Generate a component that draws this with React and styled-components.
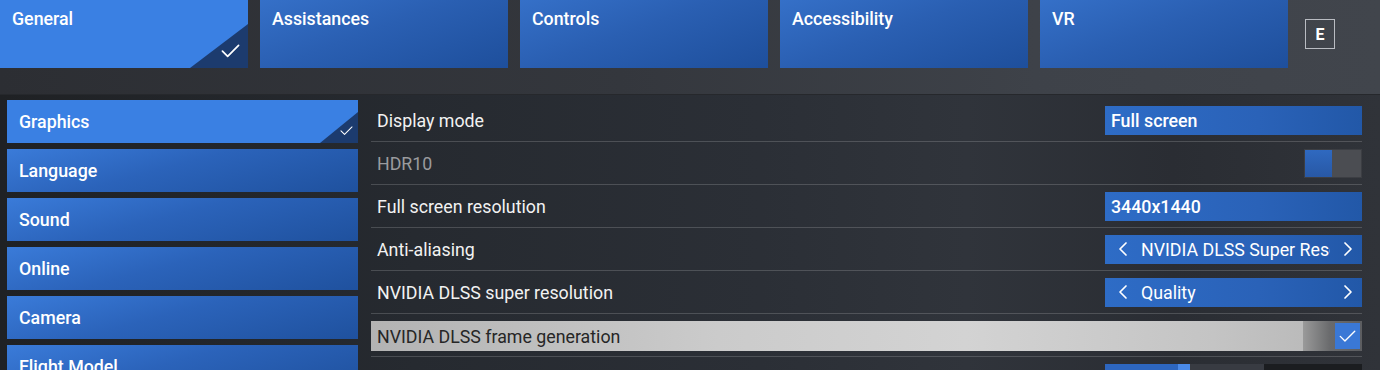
import React from 'react';
import styled, { createGlobalStyle } from 'styled-components';
import { ChevronLeft, ChevronRight } from 'lucide-react';

const GlobalStyle = createGlobalStyle`
  html, body {
    margin: 0;
    padding: 0;
    background: #25272b;
    overflow: hidden;
  }
  * {
    box-sizing: border-box;
  }
`;

const Page = styled.div`
  width: 1380px;
  height: 370px;
  overflow: hidden;
  font-family: Roboto, 'Noto Sans', sans-serif;
  color: #fff;
  background: linear-gradient(90deg, #1f2124 0%, #262a30 30%, #2b2f36 55%, #30343b 70%, #2a2d33 85%, #303339 100%);
`;

const TopBar = styled.div`
  height: 95px;
  display: flex;
  gap: 12px;
  background: linear-gradient(90deg, #2c2e33 0%, #34373d 45%, #3e4249 75%, #41454c 100%);
  border-bottom: 1px solid #26282c;
`;

const Tab = styled.div`
  position: relative;
  width: 248px;
  height: 68px;
  padding: 8px 12px;
  font-size: 17.8px;
  font-weight: 500;
  background: ${({ $active }) =>
    $active
      ? '#3a80e3'
      : 'linear-gradient(160deg, #3570c8 0%, #2a5fb2 45%, #1e4f9c 100%)'};
`;

const Corner = styled.div`
  position: absolute;
  right: 0;
  bottom: 0;
  width: ${({ $w }) => $w}px;
  height: ${({ $h }) => $h}px;
  background: #1c3b6e;
  clip-path: polygon(100% 0, 100% 100%, 0 100%);
  display: flex;
  align-items: flex-end;
  justify-content: flex-end;
`;

const CornerCheck = styled.svg`
  margin: ${({ $m }) => $m};
`;

const EWrap = styled.div`
  flex: 1;
  display: flex;
  padding-top: 19px;
  padding-left: 5px;
`;

const EKey = styled.div`
  width: 30px;
  height: 30px;
  border: 1.5px solid #b9bcc2;
  display: flex;
  align-items: center;
  justify-content: center;
  font-size: 16px;
  font-weight: 700;
`;

const Main = styled.div`
  display: flex;
  padding-left: 7px;
`;

const Sidebar = styled.div`
  width: 351px;
  padding-top: 5px;
  display: flex;
  flex-direction: column;
  gap: 6px;
`;

const SideItem = styled.div`
  position: relative;
  flex-shrink: 0;
  height: 43px;
  padding: 0 12px;
  display: flex;
  align-items: center;
  font-size: 17.8px;
  font-weight: 500;
  background: ${({ $active }) =>
    $active
      ? '#3a80e3'
      : 'linear-gradient(165deg, #3a7bd9 0%, #2b63ba 45%, #1f519e 100%)'};
`;

const Panel = styled.div`
  width: 991px;
  margin-left: 13px;
  padding-top: 4px;
  display: flex;
  flex-direction: column;
`;

const Row = styled.div`
  flex-shrink: 0;
  height: 43px;
  display: flex;
  align-items: center;
  justify-content: space-between;
  border-bottom: 1.5px solid rgba(255, 255, 255, 0.17);
`;

const HighlightWrap = styled(Row)`
  padding: 7px 0 5px;
`;

const Highlight = styled.div`
  height: 100%;
  width: 100%;
  display: flex;
  align-items: center;
  justify-content: space-between;
  background: linear-gradient(90deg, #b3b3b3 0%, #cbcbcb 35%, #d3d3d3 60%, #c4c4c4 85%, #b5b5b5 100%);
`;

const Label = styled.div`
  padding-left: 6px;
  font-size: 17.8px;
  color: ${({ $tone }) =>
    $tone === 'dim' ? '#9a9b9e' : $tone === 'dark' ? '#262626' : '#f2f2f2'};
`;

const ValueBox = styled.div`
  width: 257px;
  height: 29px;
  padding: 0 6px;
  display: flex;
  align-items: center;
  font-size: 17.8px;
  font-weight: 500;
  background: linear-gradient(90deg, #2e6cc6 0%, #2a62b8 60%, #2258a8 100%);
`;

const Selector = styled(ValueBox)`
  padding: 0 2px 0 6px;
  font-weight: 400;
  gap: 6px;
`;

const SelectorText = styled.span`
  flex: 1;
  white-space: nowrap;
  overflow: hidden;
`;

const Toggle = styled.div`
  width: 58px;
  height: 29px;
  display: flex;
  background: #4b4d52;
  border: 1px solid #3c3e43;
`;

const ToggleKnob = styled.div`
  width: 27px;
  background: linear-gradient(180deg, #2f69c0, #2858a5);
`;

const CheckCell = styled.div`
  width: 59px;
  height: 100%;
  display: flex;
  align-items: center;
  justify-content: flex-end;
  padding-right: 2px;
  background: linear-gradient(90deg, #9a9a9a 0%, #6a6b6d 45%, #5c5d60 100%);
`;

const CheckBox = styled.div`
  width: 25px;
  height: 26px;
  display: flex;
  align-items: center;
  justify-content: center;
  background: #3a78d6;
`;

const Slider = styled.div`
  width: 257px;
  height: 29px;
  display: flex;
  align-self: flex-start;
  margin-top: 7px;
  margin-left: auto;
`;

const SliderFill = styled.div`
  width: 73px;
  background: #2d66bf;
`;

const SliderThumb = styled.div`
  width: 12px;
  background: #4a8ae8;
`;

const SliderTrack = styled.div`
  width: 74px;
  background: #383b42;
`;

const SliderInput = styled.div`
  flex: 1;
  background: #1b1d20;
`;

const tabs = ['General', 'Assistances', 'Controls', 'Accessibility', 'VR'];
const sideItems = ['Graphics', 'Language', 'Sound', 'Online', 'Camera', 'Flight Model'];

function CheckMark({ size, stroke, m }) {
  return (
    <CornerCheck $m={m} width={size} height={size * 0.75} viewBox="0 0 20 15" fill="none">
      <path d="M1.5 7.5 L7 13 L18.5 1.5" stroke="#fff" strokeWidth={stroke} strokeLinecap="round" strokeLinejoin="round" />
    </CornerCheck>
  );
}

function App() {
  return (
    <Page>
      <GlobalStyle />
      <TopBar>
        {tabs.map((t, i) => (
          <Tab key={t} $active={i === 0}>
            {t}
            {i === 0 && (
              <Corner $w={58} $h={44}>
                <CheckMark size={19} stroke={1.8} m="0 8px 10px 0" />
              </Corner>
            )}
          </Tab>
        ))}
        <EWrap>
          <EKey>E</EKey>
        </EWrap>
      </TopBar>
      <Main>
        <Sidebar>
          {sideItems.map((s, i) => (
            <SideItem key={s} $active={i === 0}>
              {s}
              {i === 0 && (
                <Corner $w={38} $h={31}>
                  <CheckMark size={13} stroke={1.6} m="0 5px 7px 0" />
                </Corner>
              )}
            </SideItem>
          ))}
        </Sidebar>
        <Panel>
          <Row>
            <Label>Display mode</Label>
            <ValueBox>Full screen</ValueBox>
          </Row>
          <Row>
            <Label $tone="dim">HDR10</Label>
            <Toggle>
              <ToggleKnob />
            </Toggle>
          </Row>
          <Row>
            <Label>Full screen resolution</Label>
            <ValueBox>3440x1440</ValueBox>
          </Row>
          <Row>
            <Label>Anti-aliasing</Label>
            <Selector>
              <ChevronLeft size={24} strokeWidth={1.7} />
              <SelectorText>NVIDIA DLSS Super Resolution</SelectorText>
              <ChevronRight size={24} strokeWidth={1.7} />
            </Selector>
          </Row>
          <Row>
            <Label>NVIDIA DLSS super resolution</Label>
            <Selector>
              <ChevronLeft size={24} strokeWidth={1.7} />
              <SelectorText>Quality</SelectorText>
              <ChevronRight size={24} strokeWidth={1.7} />
            </Selector>
          </Row>
          <HighlightWrap>
            <Highlight>
              <Label $tone="dark">NVIDIA DLSS frame generation</Label>
              <CheckCell>
                <CheckBox>
                  <CheckMark size={17} stroke={1.6} m="0" />
                </CheckBox>
              </CheckCell>
            </Highlight>
          </HighlightWrap>
          <Row>
            <Slider>
              <SliderFill />
              <SliderThumb />
              <SliderTrack />
              <SliderInput />
            </Slider>
          </Row>
        </Panel>
      </Main>
    </Page>
  );
}

export default App;
